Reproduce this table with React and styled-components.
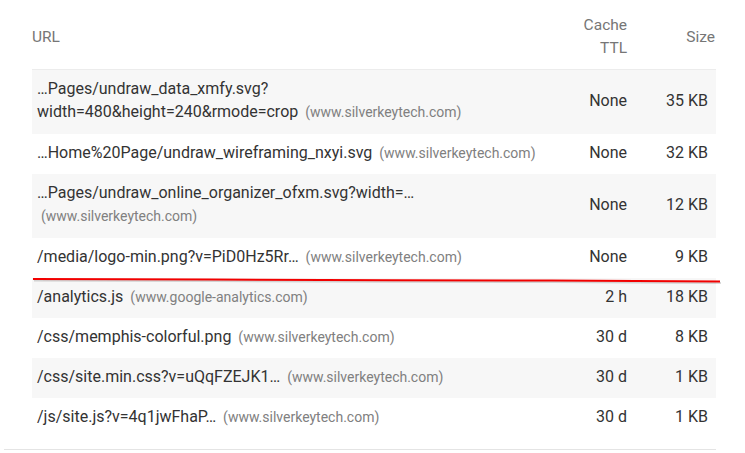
import React from 'react'
import styled, { createGlobalStyle } from 'styled-components'

const GlobalStyle = createGlobalStyle`
    body {
        margin: 0;
        background: #fff;
        font-family: Roboto, "Liberation Sans", sans-serif;
    }
`

const rows = [
    { url: '…Pages/undraw_data_xmfy.svg?', url2: 'width=480&height=240&rmode=crop', host: 'www.silverkeytech.com', ttl: 'None', size: '35 KB' },
    { url: '…Home%20Page/undraw_wireframing_nxyi.svg', host: 'www.silverkeytech.com', ttl: 'None', size: '32 KB' },
    { url: '…Pages/undraw_online_organizer_ofxm.svg?width=…', host: 'www.silverkeytech.com', hostBreak: true, ttl: 'None', size: '12 KB' },
    { url: '/media/logo-min.png?v=PiD0Hz5Rr…', host: 'www.silverkeytech.com', ttl: 'None', size: '9 KB', marked: true },
    { url: '/analytics.js', host: 'www.google-analytics.com', ttl: '2 h', size: '18 KB' },
    { url: '/css/memphis-colorful.png', host: 'www.silverkeytech.com', ttl: '30 d', size: '8 KB' },
    { url: '/css/site.min.css?v=uQqFZEJK1…', host: 'www.silverkeytech.com', ttl: '30 d', size: '1 KB' },
    { url: '/js/site.js?v=4q1jwFhaP…', host: 'www.silverkeytech.com', ttl: '30 d', size: '1 KB' },
]

// hand drawn red mark under the logo row
const markPath = 'M1 2 L180 2.6 L360 3.2 L520 3.6 L688 4.6'

export default function App() {
    return (
        <>
            <GlobalStyle />
            <Page>
                <Table>
                    <Head>
                        <HeadUrl>URL</HeadUrl>
                        <HeadTtl>Cache<br />TTL</HeadTtl>
                        <HeadSize>Size</HeadSize>
                    </Head>
                    {rows.map((r, i) => (
                        <Row key={i} $shaded={i % 2 === 0} $double={!!(r.url2 || r.hostBreak)}>
                            <UrlCell>
                                {r.url}
                                {r.url2 && <><br />{r.url2}</>}
                                {r.hostBreak ? <br /> : ' '}
                                <Host $wrapped={r.hostBreak}>({r.host})</Host>
                            </UrlCell>
                            <TtlCell>{r.ttl}</TtlCell>
                            <SizeCell>{r.size}</SizeCell>
                            {r.marked && (
                                <Underline width="690" height="8" viewBox="0 0 690 8">
                                    <path d={markPath} stroke="rgba(0,0,0,0.15)" strokeWidth="2" fill="none" transform="translate(1 1.5)" />
                                    <path d={markPath} stroke="#f20000" strokeWidth="2" fill="none" />
                                </Underline>
                            )}
                        </Row>
                    ))}
                </Table>
                <Divider />
            </Page>
        </>
    )
}

const Page = styled.div`
    width: 745px;
    padding: 14px 0 0 4px;
    box-sizing: border-box;
`
const Table = styled.div`
    margin-left: 28px;
    width: 684px;
    display: flex;
    flex-direction: column;
`
const Head = styled.div`
    display: grid;
    grid-template-columns: 1fr 90px 89px;
    align-items: center;
    padding-bottom: 9px;
    border-bottom: 1px solid #ececec;
    color: #767676;
    font-size: 15.5px;
    line-height: 23px;
`
const HeadUrl = styled.div``
const HeadTtl = styled.div`
    text-align: right;
`
const HeadSize = styled.div`
    text-align: right;
    padding-right: 1px;
`
const Row = styled.div`
    position: relative;
    display: grid;
    grid-template-columns: 1fr 90px 89px;
    align-items: center;
    padding: 7px 0 ${p => (p.$double ? '11px' : '10px')};
    background: ${p => (p.$shaded ? '#f7f7f7' : '#fff')};
    color: #333;
    font-size: 16px;
    line-height: 23px;
`
const UrlCell = styled.div`
    padding-left: 5px;
    white-space: nowrap;
`
const Host = styled.span`
    margin-left: ${p => (p.$wrapped ? '4px' : '3px')};
    color: #808080;
    font-size: 14px;
    line-height: 16px;
`
const TtlCell = styled.div`
    text-align: right;
`
const SizeCell = styled.div`
    text-align: right;
    padding-right: 8px;
`
const Underline = styled.svg`
    position: absolute;
    z-index: 1;
    left: 0;
    bottom: -7px;
    overflow: visible;
`
const Divider = styled.div`
    margin-top: 11px;
    width: 712px;
    height: 1px;
    background: #e4e4e4;
`
